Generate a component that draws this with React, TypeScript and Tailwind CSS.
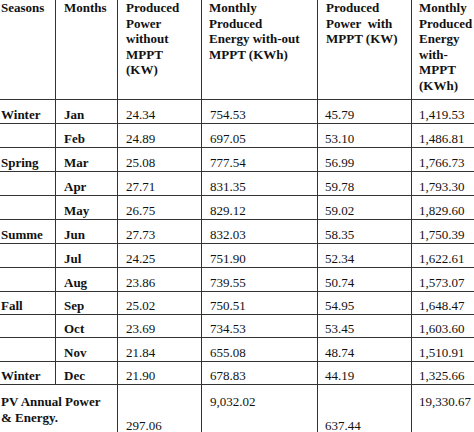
import React from "react";

type Row = {
  s: string;
  m: string;
  a: string;
  b: string;
  c: string;
  d: string;
  h: string;
};

const rows: Row[] = [
  { s: "Winter", m: "Jan", a: "24.34", b: "754.53", c: "45.79", d: "1,419.53", h: "h-[24px]" },
  { s: "", m: "Feb", a: "24.89", b: "697.05", c: "53.10", d: "1,486.81", h: "h-[24px]" },
  { s: "Spring", m: "Mar", a: "25.08", b: "777.54", c: "56.99", d: "1,766.73", h: "h-[24px]" },
  { s: "", m: "Apr", a: "27.71", b: "831.35", c: "59.78", d: "1,793.30", h: "h-[24px]" },
  { s: "", m: "May", a: "26.75", b: "829.12", c: "59.02", d: "1,829.60", h: "h-[24px]" },
  { s: "Summe", m: "Jun", a: "27.73", b: "832.03", c: "58.35", d: "1,750.39", h: "h-[24px]" },
  { s: "", m: "Jul", a: "24.25", b: "751.90", c: "52.34", d: "1,622.61", h: "h-[24px]" },
  { s: "", m: "Aug", a: "23.86", b: "739.55", c: "50.74", d: "1,573.07", h: "h-[24px]" },
  { s: "Fall", m: "Sep", a: "25.02", b: "750.51", c: "54.95", d: "1,648.47", h: "h-[23px]" },
  { s: "", m: "Oct", a: "23.69", b: "734.53", c: "53.45", d: "1,603.60", h: "h-[23px]" },
  { s: "", m: "Nov", a: "21.84", b: "655.08", c: "48.74", d: "1,510.91", h: "h-[24px]" },
  { s: "Winter", m: "Dec", a: "21.90", b: "678.83", c: "44.19", d: "1,325.66", h: "h-[23px]" },
];

const grid = "grid grid-cols-[56px_62px_84px_116px_94px_68px]";
const line = "border-[#333]";

export default function App() {
  return (
    <div className="w-[474px] h-[432px] overflow-hidden bg-white text-[#111] [font-family:'Liberation_Serif','Times_New_Roman',serif] text-[13px] leading-[15.5px]">
      <div className="w-[480px]">
        {/* Header */}
        <div className={`${grid} h-[100px] border-b ${line} font-bold`}>
          <div className={`border-r ${line} pl-[1px] pt-0`}>Seasons</div>
          <div className={`border-r ${line} pl-[8px]`}>Months</div>
          <div className={`border-r ${line} pl-[8px] pr-[8px]`}>Produced Power without MPPT (KW)</div>
          <div className={`border-r ${line} pl-[7px] pr-[14px]`}>Monthly Produced Energy with-out MPPT (KWh)</div>
          <div className={`border-r ${line} pl-[8px] whitespace-pre-wrap`}>{"Produced Power  with MPPT (KW)"}</div>
          <div className="pl-[7px]">Monthly Produced Energy with-MPPT (KWh)</div>
        </div>
        {/* Body */}
        {rows.map((r) => (
          <div key={r.m} className={`${grid} ${r.h} border-b ${line}`}>
            <div className={`border-r ${line} pl-[1px] flex items-end pb-[1px] font-bold whitespace-nowrap overflow-hidden`}>{r.s}</div>
            <div className={`border-r ${line} pl-[8px] flex items-end pb-[1px] font-bold`}>{r.m}</div>
            <div className={`border-r ${line} pl-[8px] flex items-end pb-[1px]`}>{r.a}</div>
            <div className={`border-r ${line} pl-[8px] flex items-end pb-[1px]`}>{r.b}</div>
            <div className={`border-r ${line} pl-[7px] flex items-end pb-[1px]`}>{r.c}</div>
            <div className="pl-[7px] flex items-end pb-[1px]">{r.d}</div>
          </div>
        ))}
        {/* Total */}
        <div className={`${grid} h-[60px]`}>
          <div className={`col-span-2 border-r ${line} pl-[1px] pr-[8px] pt-[9px] font-bold`}>PV Annual Power &amp; Energy.</div>
          <div className={`border-r ${line} pl-[8px] pt-[33px]`}>297.06</div>
          <div className={`border-r ${line} pl-[8px] pt-[9px]`}>9,032.02</div>
          <div className={`border-r ${line} pl-[7px] pt-[33px]`}>637.44</div>
          <div className="pl-[7px] pt-[9px]">19,330.67</div>
        </div>
      </div>
    </div>
  );
}
